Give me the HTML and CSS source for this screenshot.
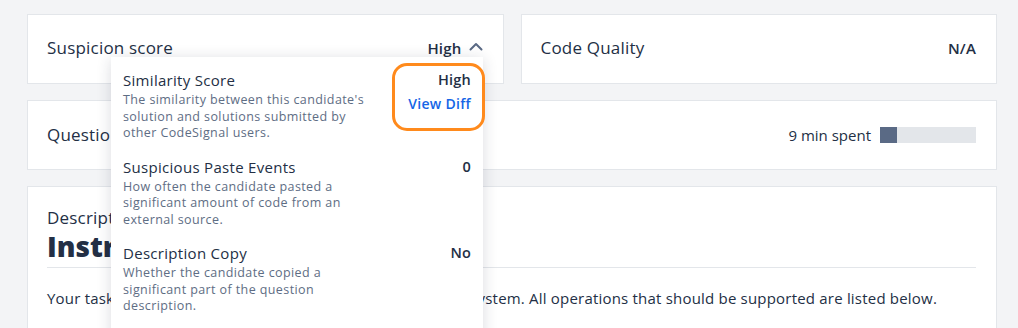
FILE: index.html
```html
<!DOCTYPE html>
<html>
<head>
<meta charset="utf-8">
<link rel="stylesheet" href="styles.css">
</head>
<body>
<div class="page">
  <div class="top-row">
    <div class="card metric suspicion">
      <span class="metric-label">Suspicion score</span>
      <span class="metric-value">High
        <svg class="chevron" width="14" height="9" viewBox="0 0 14 9"><path d="M1.5 7.5 L7 2 L12.5 7.5" fill="none" stroke="#5a6a85" stroke-width="2" stroke-linecap="round" stroke-linejoin="round"/></svg>
      </span>
      <div class="popover">
        <div class="pop-item">
          <div class="pop-text">
            <div class="pop-title">Similarity Score</div>
            <div class="pop-desc">The similarity between this candidate's solution and solutions submitted by other CodeSignal users.</div>
          </div>
          <div class="pop-right">
            <div class="pop-value">High</div>
            <div class="pop-link">View Diff</div>
          </div>
        </div>
        <div class="pop-item">
          <div class="pop-text">
            <div class="pop-title">Suspicious Paste Events</div>
            <div class="pop-desc">How often the candidate pasted a significant amount of code from an external source.</div>
          </div>
          <div class="pop-right">
            <div class="pop-value">0</div>
          </div>
        </div>
        <div class="pop-item">
          <div class="pop-text">
            <div class="pop-title">Description Copy</div>
            <div class="pop-desc">Whether the candidate copied a significant part of the question description.</div>
          </div>
          <div class="pop-right">
            <div class="pop-value">No</div>
          </div>
        </div>
        <div class="highlight"></div>
      </div>
    </div>
    <div class="card metric">
      <span class="metric-label">Code Quality</span>
      <span class="metric-value">N/A</span>
    </div>
  </div>
  <div class="card metric questions">
    <span class="metric-label">Question 1</span>
    <div class="time">
      <span class="time-label">9 min spent</span>
      <div class="bar"><div class="bar-fill" style="width:18%"></div></div>
    </div>
  </div>
  <div class="card desc-card">
    <div class="desc-label">Description</div>
    <h1 class="desc-title">Instructions</h1>
    <p class="desc-text">Your task is to implement a simplified version of a banking system. All operations that should be supported are listed below.</p>
  </div>
</div>
</body>
</html>
```
FILE: styles.css
```css
* { box-sizing: border-box; }
html, body { margin: 0; padding: 0; }
body {
  background: #f3f4f6;
  font-family: "Open Sans", "Liberation Sans", sans-serif;
  color: #232f45;
  width: 1018px;
  height: 328px;
  overflow: hidden;
}
.page {
  padding: 14px 21px 0 27px;
  display: flex;
  flex-direction: column;
  gap: 16px;
}
.top-row {
  display: grid;
  grid-template-columns: 1fr 1fr;
  gap: 17px;
}
.card {
  background: #fff;
  border: 1px solid #e3e6ea;
}
.metric {
  height: 70px;
  display: flex;
  align-items: center;
  justify-content: space-between;
  padding: 0 20px 0 19px;
}
.suspicion { position: relative; }
.metric-label {
  font-size: 17px;
  font-weight: 500;
  letter-spacing: 0.2px;
  margin-top: -3px;
}
.metric-value {
  font-size: 15px;
  font-weight: 600;
  letter-spacing: 0.2px;
  display: flex;
  align-items: center;
  gap: 7px;
  margin-top: -3px;
}
.questions .metric-label { margin-top: -2px; }
.chevron { display: block; margin-top: -2px; }
.popover {
  position: absolute;
  left: 83px;
  top: 42px;
  width: 372px;
  background: #fff;
  box-shadow: 0 2px 14px rgba(30, 40, 60, 0.16);
  padding: 13px 12px 40px 12px;
  display: flex;
  flex-direction: column;
  gap: 15px;
  z-index: 5;
}
.pop-item {
  display: flex;
  justify-content: space-between;
}
.pop-text { width: 252px; }
.pop-title {
  font-size: 15px;
  font-weight: 500;
  letter-spacing: 0.3px;
  line-height: 20px;
}
.pop-desc {
  margin-top: 2px;
  font-size: 12.5px;
  letter-spacing: 0.4px;
  line-height: 16.5px;
  color: #5e6d84;
}
.pop-right {
  display: flex;
  flex-direction: column;
  align-items: flex-end;
}
.pop-value {
  font-size: 14.5px;
  font-weight: 600;
  letter-spacing: 0.2px;
  line-height: 20px;
}
.pop-link {
  margin-top: 4px;
  font-size: 14px;
  font-weight: 600;
  letter-spacing: 0.3px;
  color: #1565e6;
  line-height: 20px;
}
.highlight {
  position: absolute;
  left: 281px;
  top: 6px;
  width: 93px;
  height: 68px;
  border: 3.5px solid #ff8a1c;
  border-radius: 15px;
}
.time {
  display: flex;
  align-items: center;
  gap: 9px;
}
.time-label {
  font-size: 15px;
  font-weight: 500;
}
.bar {
  width: 96px;
  height: 16px;
  background: #e3e6ea;
}
.bar-fill {
  height: 100%;
  background: #5a6a85;
}
.desc-card {
  padding: 21px 20px 40px 19px;
  height: 200px;
}
.desc-label {
  font-size: 17px;
  font-weight: 500;
  letter-spacing: 0.2px;
  line-height: 20px;
}
.desc-title {
  margin: 1px 0 0 0;
  font-size: 28px;
  font-weight: 800;
  line-height: 34px;
  padding-bottom: 4px;
  border-bottom: 1px solid #e3e6ea;
}
.desc-text {
  margin: 20px 0 0 0;
  font-size: 15px;
  font-weight: 500;
  letter-spacing: 0.2px;
  line-height: 20px;
}
```
